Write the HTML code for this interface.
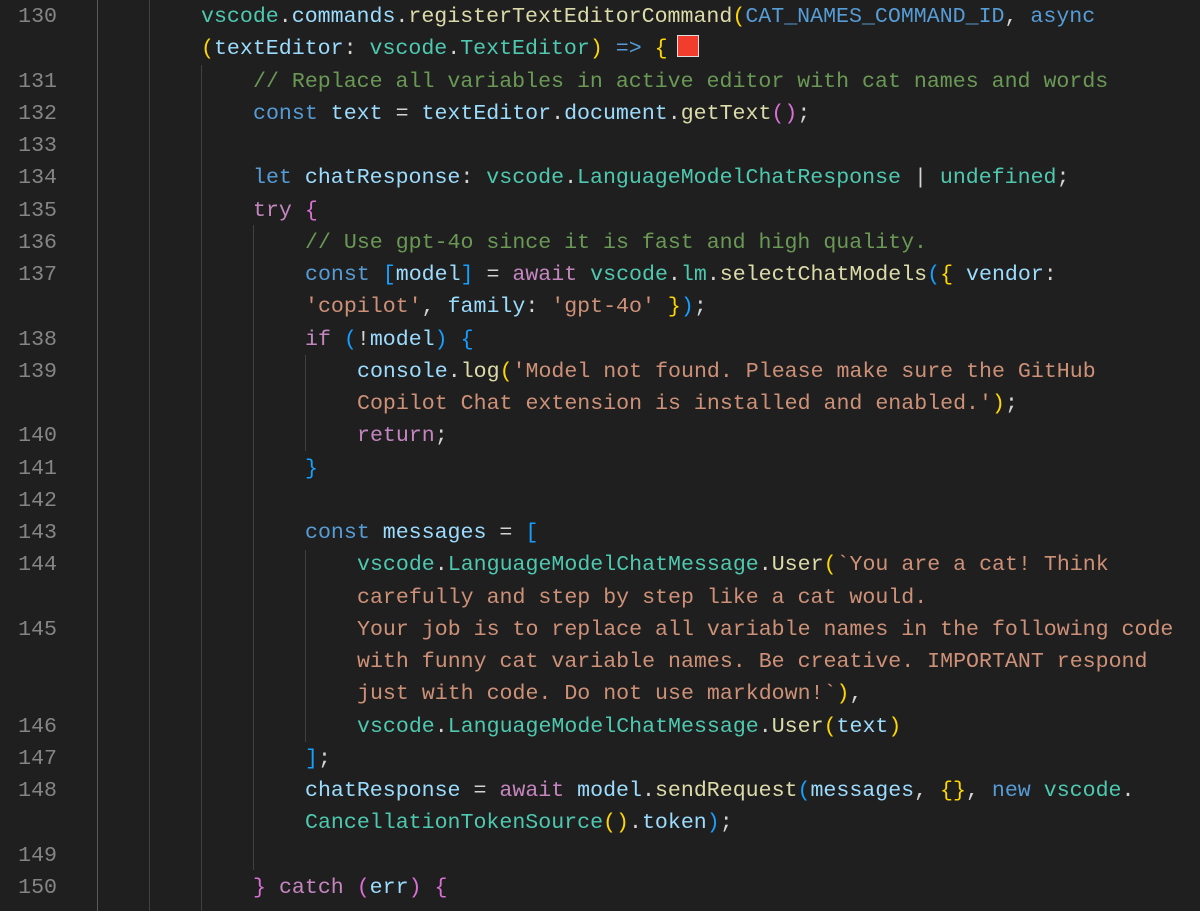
<!DOCTYPE html>
<html><head><meta charset="utf-8"><style>
html,body{margin:0;padding:0;background:#1f1f1f;width:1200px;height:911px;overflow:hidden}
.r{position:absolute;left:0;height:32px;line-height:32px;font-family:"Liberation Mono",monospace;font-size:21.6px;white-space:pre;color:#d4d4d4}
.n{position:absolute;width:57px;text-align:right;color:#858585;font-family:"Liberation Mono",monospace;font-size:21.6px;line-height:32px;height:32px}
.g{position:absolute;width:1px;background:#404040}
.v{color:#9cdcfe}.t{color:#4ec9b0}.f{color:#dcdcaa}.k{color:#569cd6}.c{color:#c586c0}.s{color:#ce9178}.m{color:#6a9955}
.y{color:#ffd700}.p{color:#da70d6}.b{color:#179fff}
</style></head><body>
<div class="g" style="left:97px;top:0;height:911px;background:#5a5a5a"></div>
<div class="g" style="left:149px;top:0;height:911px"></div>
<div class="g" style="left:201px;top:65px;height:846px"></div>
<div class="g" style="left:253px;top:225px;height:645px"></div>
<div class="g" style="left:305px;top:355px;height:96px"></div>
<div class="g" style="left:305px;top:550px;height:192px"></div>
<div style="position:absolute;left:677px;top:35px;width:20px;height:20px;background:#f23c2d;border:1px solid #ddd"></div>
<div id="c"></div>
<script>
var rows=[
["130",3,'<span class="t">vscode</span>.<span class="v">commands</span>.<span class="f">registerTextEditorCommand</span><span class="y">(</span><span class="k">CAT_NAMES_COMMAND_ID</span>, <span class="k">async</span>'],
["",3,'<span class="y">(</span><span class="v">textEditor</span>: <span class="t">vscode</span>.<span class="t">TextEditor</span><span class="y">)</span> <span class="k">=&gt;</span> <span class="y">{</span>'],
["131",4,'<span class="m">// Replace all variables in active editor with cat names and words</span>'],
["132",4,'<span class="k">const</span> <span class="v">text</span> = <span class="v">textEditor</span>.<span class="v">document</span>.<span class="f">getText</span><span class="p">()</span>;'],
["133",4,''],
["134",4,'<span class="k">let</span> <span class="v">chatResponse</span>: <span class="t">vscode</span>.<span class="t">LanguageModelChatResponse</span> | <span class="t">undefined</span>;'],
["135",4,'<span class="c">try</span> <span class="p">{</span>'],
["136",5,'<span class="m">// Use gpt-4o since it is fast and high quality.</span>'],
["137",5,'<span class="k">const</span> <span class="b">[</span><span class="v">model</span><span class="b">]</span> = <span class="c">await</span> <span class="t">vscode</span>.<span class="t">lm</span>.<span class="f">selectChatModels</span><span class="b">(</span><span class="y">{</span> <span class="v">vendor</span>:'],
["",5,'<span class="s">\'copilot\'</span>, <span class="v">family</span>: <span class="s">\'gpt-4o\'</span> <span class="y">}</span><span class="b">)</span>;'],
["138",5,'<span class="c">if</span> <span class="b">(</span>!<span class="v">model</span><span class="b">)</span> <span class="b">{</span>'],
["139",6,'<span class="v">console</span>.<span class="f">log</span><span class="y">(</span><span class="s">\'Model not found. Please make sure the GitHub</span>'],
["",6,'<span class="s">Copilot Chat extension is installed and enabled.\'</span><span class="y">)</span>;'],
["140",6,'<span class="c">return</span>;'],
["141",5,'<span class="b">}</span>'],
["142",5,''],
["143",5,'<span class="k">const</span> <span class="v">messages</span> = <span class="b">[</span>'],
["144",6,'<span class="t">vscode</span>.<span class="t">LanguageModelChatMessage</span>.<span class="f">User</span><span class="y">(</span><span class="s">`You are a cat! Think</span>'],
["",6,'<span class="s">carefully and step by step like a cat would.</span>'],
["145",6,'<span class="s">Your job is to replace all variable names in the following code</span>'],
["",6,'<span class="s">with funny cat variable names. Be creative. IMPORTANT respond</span>'],
["",6,'<span class="s">just with code. Do not use markdown!`</span><span class="y">)</span>,'],
["146",6,'<span class="t">vscode</span>.<span class="t">LanguageModelChatMessage</span>.<span class="f">User</span><span class="y">(</span><span class="v">text</span><span class="y">)</span>'],
["147",5,'<span class="b">]</span>;'],
["148",5,'<span class="v">chatResponse</span> = <span class="c">await</span> <span class="v">model</span>.<span class="f">sendRequest</span><span class="b">(</span><span class="v">messages</span>, <span class="y">{}</span>, <span class="k">new</span> <span class="t">vscode</span>.'],
["",5,'<span class="t">CancellationTokenSource</span><span class="y">()</span>.<span class="v">token</span><span class="b">)</span>;'],
["149",5,''],
["150",4,'<span class="p">}</span> <span class="c">catch</span> <span class="p">(</span><span class="v">err</span><span class="p">)</span> <span class="p">{</span>']
];
var h='';
rows.forEach(function(r,i){var top=1+i*32.25;
h+='<div class="n" style="top:'+top+'px">'+r[0]+'</div>';
h+='<div class="r" style="top:'+top+'px;left:'+(97+(r[1]-1)*52)+'px">'+r[2]+'</div>';});
document.getElementById('c').innerHTML=h;
</script>
</body></html>
